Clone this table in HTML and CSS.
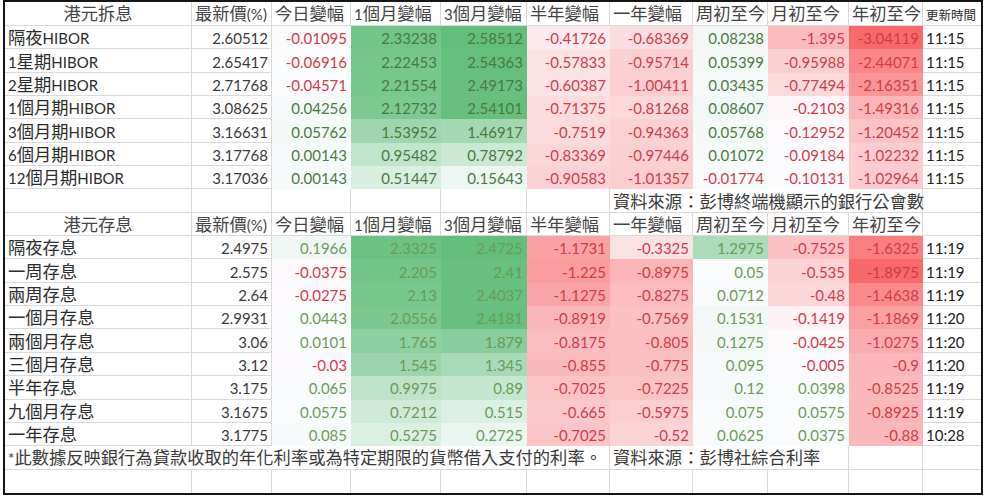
FILE: index.html
```html
<!DOCTYPE html>
<html lang="zh-Hant">
<head>
<meta charset="utf-8">
<title>港元利率</title>
<link rel="stylesheet" href="styles.css">
</head>
<body>
<div class="frame">
<div class="sheet">
  <div class="c hc"><span class="zh">港元拆息</span></div>
  <div class="c h"><span class="zh">最新價</span>(%)</div>
  <div class="c h"><span class="zh">今日變幅</span></div>
  <div class="c h">1<span class="zh">個月變幅</span></div>
  <div class="c h">3<span class="zh">個月變幅</span></div>
  <div class="c h"><span class="zh">半年變幅</span></div>
  <div class="c h"><span class="zh">一年變幅</span></div>
  <div class="c h"><span class="zh">周初至今</span></div>
  <div class="c h"><span class="zh">月初至今</span></div>
  <div class="c h"><span class="zh">年初至今</span></div>
  <div class="c h l"><span class="sm">更新時間</span></div>

  <div class="c nm"><span class="zh">隔夜</span>HIBOR</div>
  <div class="c px">2.60512</div>
  <div class="c v hv n">-0.01095</div>
  <div class="c v hv p">2.33238</div>
  <div class="c v hv p">2.58512</div>
  <div class="c v hv n">-0.41726</div>
  <div class="c v hv n">-0.68369</div>
  <div class="c v hv p">0.08238</div>
  <div class="c v hv n">-1.395</div>
  <div class="c v hv n">-3.04119</div>
  <div class="c t l">11:15</div>

  <div class="c nm">1<span class="zh">星期</span>HIBOR</div>
  <div class="c px">2.65417</div>
  <div class="c v hv n">-0.06916</div>
  <div class="c v hv p">2.22453</div>
  <div class="c v hv p">2.54363</div>
  <div class="c v hv n">-0.57833</div>
  <div class="c v hv n">-0.95714</div>
  <div class="c v hv p">0.05399</div>
  <div class="c v hv n">-0.95988</div>
  <div class="c v hv n">-2.44071</div>
  <div class="c t l">11:15</div>

  <div class="c nm">2<span class="zh">星期</span>HIBOR</div>
  <div class="c px">2.71768</div>
  <div class="c v hv n">-0.04571</div>
  <div class="c v hv p">2.21554</div>
  <div class="c v hv p">2.49173</div>
  <div class="c v hv n">-0.60387</div>
  <div class="c v hv n">-1.00411</div>
  <div class="c v hv p">0.03435</div>
  <div class="c v hv n">-0.77494</div>
  <div class="c v hv n">-2.16351</div>
  <div class="c t l">11:15</div>

  <div class="c nm">1<span class="zh">個月期</span>HIBOR</div>
  <div class="c px">3.08625</div>
  <div class="c v hv p">0.04256</div>
  <div class="c v hv p">2.12732</div>
  <div class="c v hv p">2.54101</div>
  <div class="c v hv n">-0.71375</div>
  <div class="c v hv n">-0.81268</div>
  <div class="c v hv p">0.08607</div>
  <div class="c v hv n">-0.2103</div>
  <div class="c v hv n">-1.49316</div>
  <div class="c t l">11:15</div>

  <div class="c nm">3<span class="zh">個月期</span>HIBOR</div>
  <div class="c px">3.16631</div>
  <div class="c v hv p">0.05762</div>
  <div class="c v hv p">1.53952</div>
  <div class="c v hv p">1.46917</div>
  <div class="c v hv n">-0.7519</div>
  <div class="c v hv n">-0.94363</div>
  <div class="c v hv p">0.05768</div>
  <div class="c v hv n">-0.12952</div>
  <div class="c v hv n">-1.20452</div>
  <div class="c t l">11:15</div>

  <div class="c nm">6<span class="zh">個月期</span>HIBOR</div>
  <div class="c px">3.17768</div>
  <div class="c v hv p">0.00143</div>
  <div class="c v hv p">0.95482</div>
  <div class="c v hv p">0.78792</div>
  <div class="c v hv n">-0.83369</div>
  <div class="c v hv n">-0.97446</div>
  <div class="c v hv p">0.01072</div>
  <div class="c v hv n">-0.09184</div>
  <div class="c v hv n">-1.02232</div>
  <div class="c t l">11:15</div>

  <div class="c nm">12<span class="zh">個月期</span>HIBOR</div>
  <div class="c px">3.17036</div>
  <div class="c v hv p">0.00143</div>
  <div class="c v hv p">0.51447</div>
  <div class="c v hv p">0.15643</div>
  <div class="c v hv n">-0.90583</div>
  <div class="c v hv n">-1.01357</div>
  <div class="c v hv n">-0.01774</div>
  <div class="c v hv n">-0.10131</div>
  <div class="c v hv n">-1.02964</div>
  <div class="c t l">11:15</div>

  <div class="c"></div>
  <div class="c"></div>
  <div class="c"></div>
  <div class="c"></div>
  <div class="c"></div>
  <div class="c"></div>
  <div class="c src s4"><span class="zh">資料來源：彭博終端機顯示的銀行公會數</span></div>
  <div class="c l"></div>

  <div class="c hc"><span class="zh">港元存息</span></div>
  <div class="c h"><span class="zh">最新價</span>(%)</div>
  <div class="c h"><span class="zh">今日變幅</span></div>
  <div class="c h">1<span class="zh">個月變幅</span></div>
  <div class="c h">3<span class="zh">個月變幅</span></div>
  <div class="c h"><span class="zh">半年變幅</span></div>
  <div class="c h"><span class="zh">一年變幅</span></div>
  <div class="c h"><span class="zh">周初至今</span></div>
  <div class="c h"><span class="zh">月初至今</span></div>
  <div class="c h"><span class="zh">年初至今</span></div>
  <div class="c l"></div>

  <div class="c nm"><span class="zh">隔夜存息</span></div>
  <div class="c px">2.4975</div>
  <div class="c v dv q">0.1966</div>
  <div class="c v dv q">2.3325</div>
  <div class="c v dv q">2.4725</div>
  <div class="c v dv n">-1.1731</div>
  <div class="c v dv n">-0.3325</div>
  <div class="c v dv q">1.2975</div>
  <div class="c v dv n">-0.7525</div>
  <div class="c v dv n">-1.6325</div>
  <div class="c t l">11:19</div>

  <div class="c nm"><span class="zh">一周存息</span></div>
  <div class="c px">2.575</div>
  <div class="c v dv n">-0.0375</div>
  <div class="c v dv q">2.205</div>
  <div class="c v dv q">2.41</div>
  <div class="c v dv n">-1.225</div>
  <div class="c v dv n">-0.8975</div>
  <div class="c v dv q">0.05</div>
  <div class="c v dv n">-0.535</div>
  <div class="c v dv n">-1.8975</div>
  <div class="c t l">11:19</div>

  <div class="c nm"><span class="zh">兩周存息</span></div>
  <div class="c px">2.64</div>
  <div class="c v dv n">-0.0275</div>
  <div class="c v dv q">2.13</div>
  <div class="c v dv q">2.4037</div>
  <div class="c v dv n">-1.1275</div>
  <div class="c v dv n">-0.8275</div>
  <div class="c v dv q">0.0712</div>
  <div class="c v dv n">-0.48</div>
  <div class="c v dv n">-1.4638</div>
  <div class="c t l">11:19</div>

  <div class="c nm"><span class="zh">一個月存息</span></div>
  <div class="c px">2.9931</div>
  <div class="c v dv q">0.0443</div>
  <div class="c v dv q">2.0556</div>
  <div class="c v dv q">2.4181</div>
  <div class="c v dv n">-0.8919</div>
  <div class="c v dv n">-0.7569</div>
  <div class="c v dv q">0.1531</div>
  <div class="c v dv n">-0.1419</div>
  <div class="c v dv n">-1.1869</div>
  <div class="c t l">11:20</div>

  <div class="c nm"><span class="zh">兩個月存息</span></div>
  <div class="c px">3.06</div>
  <div class="c v dv q">0.0101</div>
  <div class="c v dv q">1.765</div>
  <div class="c v dv q">1.879</div>
  <div class="c v dv n">-0.8175</div>
  <div class="c v dv n">-0.805</div>
  <div class="c v dv q">0.1275</div>
  <div class="c v dv n">-0.0425</div>
  <div class="c v dv n">-1.0275</div>
  <div class="c t l">11:20</div>

  <div class="c nm"><span class="zh">三個月存息</span></div>
  <div class="c px">3.12</div>
  <div class="c v dv n">-0.03</div>
  <div class="c v dv q">1.545</div>
  <div class="c v dv q">1.345</div>
  <div class="c v dv n">-0.855</div>
  <div class="c v dv n">-0.775</div>
  <div class="c v dv q">0.095</div>
  <div class="c v dv n">-0.005</div>
  <div class="c v dv n">-0.9</div>
  <div class="c t l">11:20</div>

  <div class="c nm"><span class="zh">半年存息</span></div>
  <div class="c px">3.175</div>
  <div class="c v dv q">0.065</div>
  <div class="c v dv q">0.9975</div>
  <div class="c v dv q">0.89</div>
  <div class="c v dv n">-0.7025</div>
  <div class="c v dv n">-0.7225</div>
  <div class="c v dv q">0.12</div>
  <div class="c v dv q">0.0398</div>
  <div class="c v dv n">-0.8525</div>
  <div class="c t l">11:19</div>

  <div class="c nm"><span class="zh">九個月存息</span></div>
  <div class="c px">3.1675</div>
  <div class="c v dv q">0.0575</div>
  <div class="c v dv q">0.7212</div>
  <div class="c v dv q">0.515</div>
  <div class="c v dv n">-0.665</div>
  <div class="c v dv n">-0.5975</div>
  <div class="c v dv q">0.075</div>
  <div class="c v dv q">0.0575</div>
  <div class="c v dv n">-0.8925</div>
  <div class="c t l">11:19</div>

  <div class="c nm"><span class="zh">一年存息</span></div>
  <div class="c px">3.1775</div>
  <div class="c v dv q">0.085</div>
  <div class="c v dv q">0.5275</div>
  <div class="c v dv q">0.2725</div>
  <div class="c v dv n">-0.7025</div>
  <div class="c v dv n">-0.52</div>
  <div class="c v dv q">0.0625</div>
  <div class="c v dv q">0.0375</div>
  <div class="c v dv n">-0.88</div>
  <div class="c t l">10:28</div>

  <div class="c note s6">*<span class="zh">此數據反映銀行為貸款收取的年化利率或為特定期限的貨幣借入支付的利率。</span></div>
  <div class="c src s3"><span class="zh">資料來源：彭博社綜合利率</span></div>
  <div class="c"></div>
  <div class="c l"></div>

  <div class="c z"></div>
  <div class="c z"></div>
  <div class="c z"></div>
  <div class="c z"></div>
  <div class="c z"></div>
  <div class="c z"></div>
  <div class="c z"></div>
  <div class="c z"></div>
  <div class="c z"></div>
  <div class="c z"></div>
  <div class="c z l"></div>
</div>
</div>
<script src="script.js"></script>
</body>
</html>
```

FILE: styles.css
```css
html, body {
  margin: 0;
  padding: 0;
  background: #ffffff;
}

body {
  font-family: Lato, "Noto Sans CJK TC", sans-serif;
  font-size: 15px;
  color: #333333;
}

.frame {
  margin-left: 3px;
  width: 976px;
  border: 2px solid #151515;
}

.sheet {
  display: grid;
  grid-template-columns: 187px 80px 79px 90px 86px 83px 83px 75px 81px 74px 58px;
  grid-template-rows: 24px repeat(20, 23.35px);
}

.c {
  box-sizing: border-box;
  border-right: 1px solid #dadada;
  border-bottom: 1px solid #dadada;
  padding: 3.3px 3px 0 3px;
  line-height: 19px;
  white-space: nowrap;
  min-width: 0;
}

.zh {
  font-family: "Noto Sans CJK TC", sans-serif;
  font-size: 17.3px;
  line-height: 0;
}

.sm {
  font-family: "Noto Sans CJK TC", sans-serif;
  font-size: 12.5px;
  line-height: 0;
  color: #2a2a2a;
}

.l { border-right: 0; }
.z { border-bottom: 0; }

.hc {
  text-align: center;
  color: #444444;
}

.h {
  color: #444444;
}

.nm {
  color: #2c2c2c;
}

.px {
  text-align: right;
  color: #3a3a3a;
}

.v {
  text-align: right;
}

.n { color: #d23c46; }
.p { color: #4b7b3f; }
.q { color: #6c9c55; }

.t {
  color: #222222;
}

.src, .note {
  color: #3a3a3a;
}

.s3 { grid-column: span 3; }
.s4 { grid-column: span 4; }
.s6 { grid-column: span 6; }
```

FILE: script.js
```js
(function () {
  var WHITE = [252, 252, 255];
  var RED = [248, 105, 107];
  var GREEN = [99, 190, 123];

  function applyScale(cls) {
    var cells = Array.prototype.slice.call(document.querySelectorAll('.' + cls));
    var vals = cells.map(function (c) { return parseFloat(c.textContent); });
    var sorted = vals.slice().sort(function (a, b) { return a - b; });
    var n = sorted.length;
    var pos = (n - 1) * 0.5;
    var lo = Math.floor(pos), hi = Math.ceil(pos);
    var mid = sorted[lo] + (sorted[hi] - sorted[lo]) * (pos - lo);
    var min = sorted[0], max = sorted[n - 1];
    cells.forEach(function (c, i) {
      var v = vals[i], t, to;
      if (v <= mid) { t = (mid - v) / (mid - min); to = RED; }
      else { t = (v - mid) / (max - mid); to = GREEN; }
      var col = WHITE.map(function (w, k) { return Math.round(w + (to[k] - w) * t); });
      var s = 'rgb(' + col.join(',') + ')';
      c.style.backgroundColor = s;
      c.style.borderColor = s;
    });
  }

  applyScale('hv');
  applyScale('dv');
})();
```
